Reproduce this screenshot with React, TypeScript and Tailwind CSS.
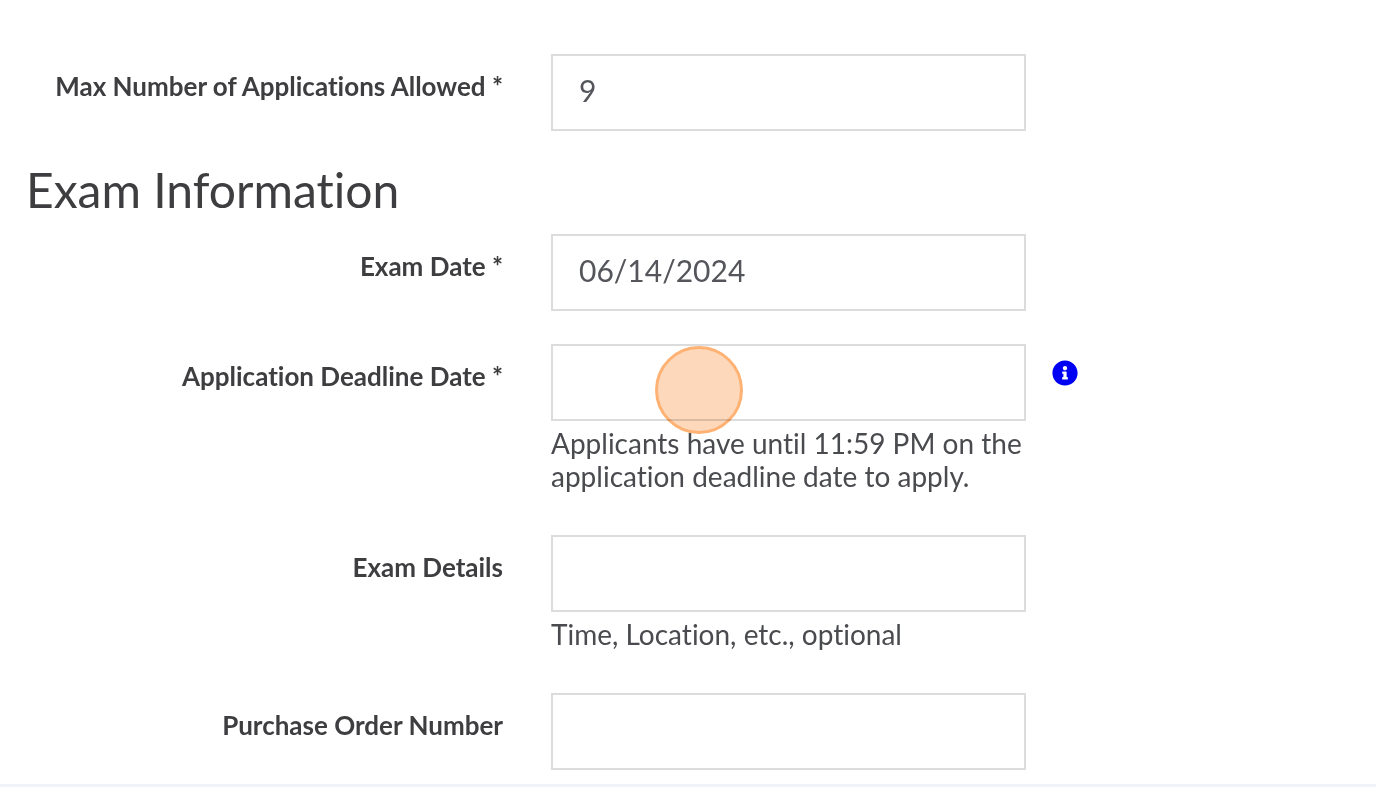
import { useState, ReactNode } from 'react';
import { FaInfoCircle } from 'react-icons/fa';

interface FieldProps {
  id: string;
  label: string;
  value: string;
  onChange: (value: string) => void;
  help?: string;
  aside?: ReactNode;
  marker?: boolean;
}

function Field({ id, label, value, onChange, help, aside, marker }: FieldProps) {
  return (
    <div className="grid grid-cols-[525fr_475fr_324fr] gap-x-[26px]">
      <label htmlFor={id} className="pt-4 pr-[22px] text-right text-[26px] leading-8 font-bold text-[#3e3e41]">
        {label}
      </label>
      <div className="relative min-w-0">
        <input
          id={id}
          type="text"
          value={value}
          onChange={e => onChange(e.target.value)}
          aria-describedby={help ? `${id}-help` : undefined}
          className="block h-[77px] w-full border-2 border-[#dcdcdc] bg-white px-[26px] pb-1.5 text-[30px] text-[#54565b] outline-none"
        />
        {help && (
          <p id={`${id}-help`} className="pt-1.5 pb-[9px] text-[28px] leading-[33px] text-[#4a4b4f]">
            {help}
          </p>
        )}
        {/* Click marker */}
        {marker && (
          <span className="pointer-events-none absolute top-[2px] left-[104px] size-[88px] rounded-full border-[3px] border-[#ffb273] bg-[#fdd8bb] mix-blend-multiply" />
        )}
      </div>
      <div>{aside}</div>
    </div>
  );
}

export default function App() {
  const [form, setForm] = useState({
    maxApplications: '9',
    examDate: '06/14/2024',
    deadline: '',
    details: '',
    poNumber: '',
  });

  const set = (key: keyof typeof form) => (value: string) => setForm({ ...form, [key]: value });

  return (
    <div className="min-h-screen bg-[#f0f4f9] font-['Lato',sans-serif] [font-variant-ligatures:none]">
      <form className="flex flex-col gap-[33px] bg-white pt-[54px] pb-3.5">
        <Field id="max-applications" label="Max Number of Applications Allowed *" value={form.maxApplications} onChange={set('maxApplications')} />

        <div>
          <h2 className="mb-[18px] pl-[26px] text-[48px] leading-[52px] font-normal text-[#3e3e41]">Exam Information</h2>
          <Field id="exam-date" label="Exam Date *" value={form.examDate} onChange={set('examDate')} />
        </div>

        <Field
          id="deadline"
          label="Application Deadline Date *"
          value={form.deadline}
          onChange={set('deadline')}
          help="Applicants have until 11:59 PM on the application deadline date to apply."
          marker
          aside={
            <button type="button" aria-label="More information" className="mt-4 block text-[#0000f5]">
              <FaInfoCircle size={26} />
            </button>
          }
        />
        <Field id="details" label="Exam Details" value={form.details} onChange={set('details')} help="Time, Location, etc., optional" />
        <Field id="po-number" label="Purchase Order Number" value={form.poNumber} onChange={set('poNumber')} />
      </form>
    </div>
  );
}
